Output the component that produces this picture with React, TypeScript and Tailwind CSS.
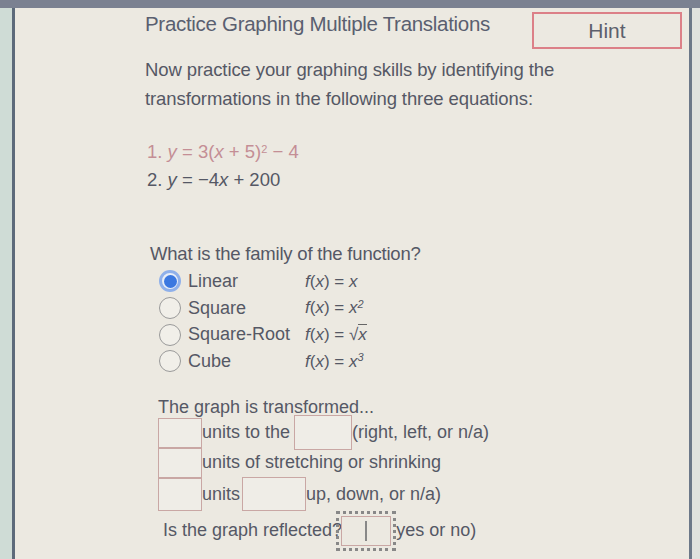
import React from "react";

const font = { fontFamily: '"Liberation Sans", Arial, Helvetica, sans-serif' };

function Radio({ checked }: { checked?: boolean }) {
  return checked ? (
    <span className="flex h-[22px] w-[22px] items-center justify-center rounded-full border-[3px] border-[#8fb0ea] bg-[#e8eef8]">
      <span className="h-[13px] w-[13px] rounded-full bg-[#3b78e0]" />
    </span>
  ) : (
    <span className="h-[22px] w-[22px] rounded-full border-[1.5px] border-[#9a9a9a] bg-[#f1efe9]" />
  );
}

function Box({ w, h }: { w: string; h: string }) {
  return <span className={`block ${w} ${h} border-[1.5px] border-[#c9a7a4] bg-[#efede7]`} />;
}

export default function App() {
  const rows = [
    { label: "Linear", checked: true, f: <>x</> },
    { label: "Square", f: <>x<sup className="text-[11px]">2</sup></> },
    {
      label: "Square-Root",
      f: (
        <>
          <span className="text-[17px]">√</span>
          <span className="border-t border-[#666]">x</span>
        </>
      ),
    },
    { label: "Cube", f: <>x<sup className="text-[11px]">3</sup></> },
  ];
  return (
    <div className="flex h-[559px] w-[700px] flex-col overflow-hidden bg-[#ebe8e0] text-[#555865]" style={font}>
      <div className="h-[8px] w-full shrink-0 bg-[#7b8191]" />
      <div className="flex flex-1">
        <div className="w-[12px] bg-[#cfdcd6]" />
        <div className="w-[3px] bg-[#5d6a7a]" />
        <div className="flex flex-1 flex-col bg-[#ece9e1] pl-[130px]">
          <div className="flex items-start">
            <div className="mt-[1px] shrink-0 whitespace-nowrap text-[20.5px] tracking-[-0.3px] text-[#5a5f70]">
              Practice Graphing Multiple Translations
            </div>
            <div className="ml-[42px] mt-[4px] flex h-[37px] w-[150px] shrink-0 items-center justify-center border-2 border-[#dc8088] text-[21px] text-[#5d606c]">
              Hint
            </div>
          </div>
          <div className="mt-[6px] whitespace-nowrap text-[18.5px] leading-[29px] tracking-[-0.1px]">
            <div>Now practice your graphing skills by identifying the</div>
            <div>transformations in the following three equations:</div>
          </div>
          <div className="ml-[2px] mt-[25px] text-[18.5px] leading-[28px]">
            <div className="text-[#c48e95]">
              1. <i>y</i> = 3(<i>x</i> + 5)<sup className="text-[11px]">2</sup> − 4
            </div>
            <div>
              2. <i>y</i> = −4<i>x</i> + 200
            </div>
          </div>
          <div className="ml-[5px] mt-[48px] text-[18.5px] leading-[24px] tracking-[-0.2px]">
            What is the family of the function?
          </div>
          <div className="ml-[14px] mt-[2px] flex flex-col">
            {rows.map((r) => (
              <div key={r.label} className="flex h-[26.7px] items-center text-[18px]">
                <Radio checked={r.checked} />
                <span className="ml-[7px] w-[117px]">{r.label}</span>
                <span className="text-[17px]">
                  <i>f</i>(<i>x</i>) = <i>{r.f}</i>
                </span>
              </div>
            ))}
          </div>
          <div className="ml-[13px] mt-[21px] text-[18px] leading-[22px]">The graph is transformed...</div>
          <div className="ml-[13px] flex text-[18px]">
            <div className="flex flex-col">
              <Box w="w-[44px]" h="h-[30px]" />
              <Box w="w-[44px]" h="h-[30px]" />
              <Box w="w-[44px]" h="h-[33px]" />
            </div>
            <div className="flex flex-col">
              <div className="flex h-[30px] items-center">
                <span>units to the</span>
                <span className="ml-[4px]"><Box w="w-[58px]" h="h-[35px]" /></span>
                <span>(right, left, or n/a)</span>
              </div>
              <div className="flex h-[30px] items-center">units of stretching or shrinking</div>
              <div className="flex h-[33px] items-center">
                <span>units</span>
                <span className="ml-[2px]"><Box w="w-[64px]" h="h-[34px]" /></span>
                <span>up, down, or n/a)</span>
              </div>
            </div>
          </div>
          <div className="ml-[18px] mt-[0px] flex items-center text-[18px]">
            <span>Is the graph reflected?</span>
            <span className="-ml-[6px] flex h-[40px] w-[60px] items-center justify-center border-[3px] border-dotted border-[#888]">
              <span className="flex h-[30px] w-[50px] items-center justify-center border border-[#c9a7a4]">
                <span className="h-[20px] w-[1.5px] bg-[#888]" />
              </span>
            </span>
            <span>yes or no)</span>
          </div>
        </div>
        <div className="w-[3px] bg-[#6c7888]" />
        <div className="w-[8px] bg-[#e0e2de]" />
      </div>
    </div>
  );
}
